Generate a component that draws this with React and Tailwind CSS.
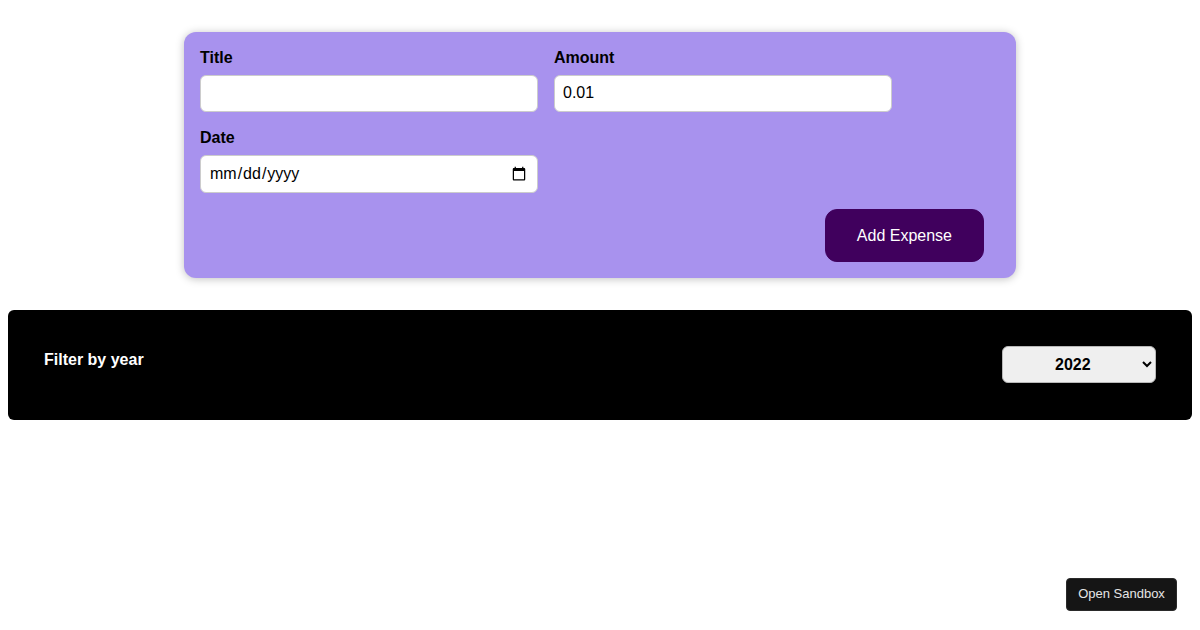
import { useState } from 'react';

function NewExpense() {
  const [title, setTitle] = useState('');
  const [amount, setAmount] = useState('0.01');
  const [date, setDate] = useState('');

  return (
    <div className="bg-[#a892ee] p-4 mx-auto my-8 w-[832px] max-w-[95%] rounded-xl text-center leading-[1.2] shadow-[0_1px_8px_rgba(0,0,0,0.25)]">
      <form onSubmit={(e) => e.preventDefault()}>
        <div className="flex flex-wrap gap-4 mb-4 text-left">
          <div>
            <label className="block font-bold mb-2">Title</label>
            <input
              type="text"
              value={title}
              onChange={(e) => setTitle(e.target.value)}
              className="bg-white p-2 rounded-md border border-[#ccc] w-[338px] leading-[1.15]"
            />
          </div>
          <div>
            <label className="block font-bold mb-2">Amount</label>
            <input
              type="number"
              min="0.01"
              step="0.01"
              value={amount}
              onChange={(e) => setAmount(e.target.value)}
              className="bg-white p-2 rounded-md border border-[#ccc] w-[338px] leading-[1.15]"
            />
          </div>
          <div>
            <label className="block font-bold mb-2">Date</label>
            <input
              type="date"
              value={date}
              onChange={(e) => setDate(e.target.value)}
              className="bg-white p-2 rounded-md border border-[#ccc] w-[338px] leading-[1.15]"
            />
          </div>
        </div>
        <div className="text-right">
          <button
            type="submit"
            className="px-[31px] py-4 mr-4 leading-[19px] border border-[#40005d] bg-[#40005d] text-white rounded-xl cursor-pointer"
          >
            Add Expense
          </button>
        </div>
      </form>
    </div>
  );
}

function ExpensesFilter() {
  const [year, setYear] = useState('2022');

  return (
    <div className="bg-black mx-2 rounded-md px-9 pt-[36px] pb-[37px] text-white">
      <div className="flex w-full items-center justify-between">
        <label className="font-bold mb-2">Filter by year</label>
        <select
          value={year}
          onChange={(e) => setYear(e.target.value)}
          className="py-2 px-12 font-bold rounded-md bg-[#efefef] text-black border border-[#b8b8b8]"
        >
          <option value="2022">2022</option>
          <option value="2021">2021</option>
          <option value="2020">2020</option>
          <option value="2019">2019</option>
        </select>
      </div>
    </div>
  );
}

export default function App() {
  return (
    <div className="flow-root bg-white text-black leading-[1.15] font-['Liberation_Sans',Arial,sans-serif]">
      <NewExpense />
      <ExpensesFilter />
      <button className="fixed right-[23px] bottom-[19px] w-[111px] h-[33px] bg-[#151515] border border-[#2a2a2a] rounded text-[13px] text-[#e5e5e5]">
        Open Sandbox
      </button>
    </div>
  );
}
